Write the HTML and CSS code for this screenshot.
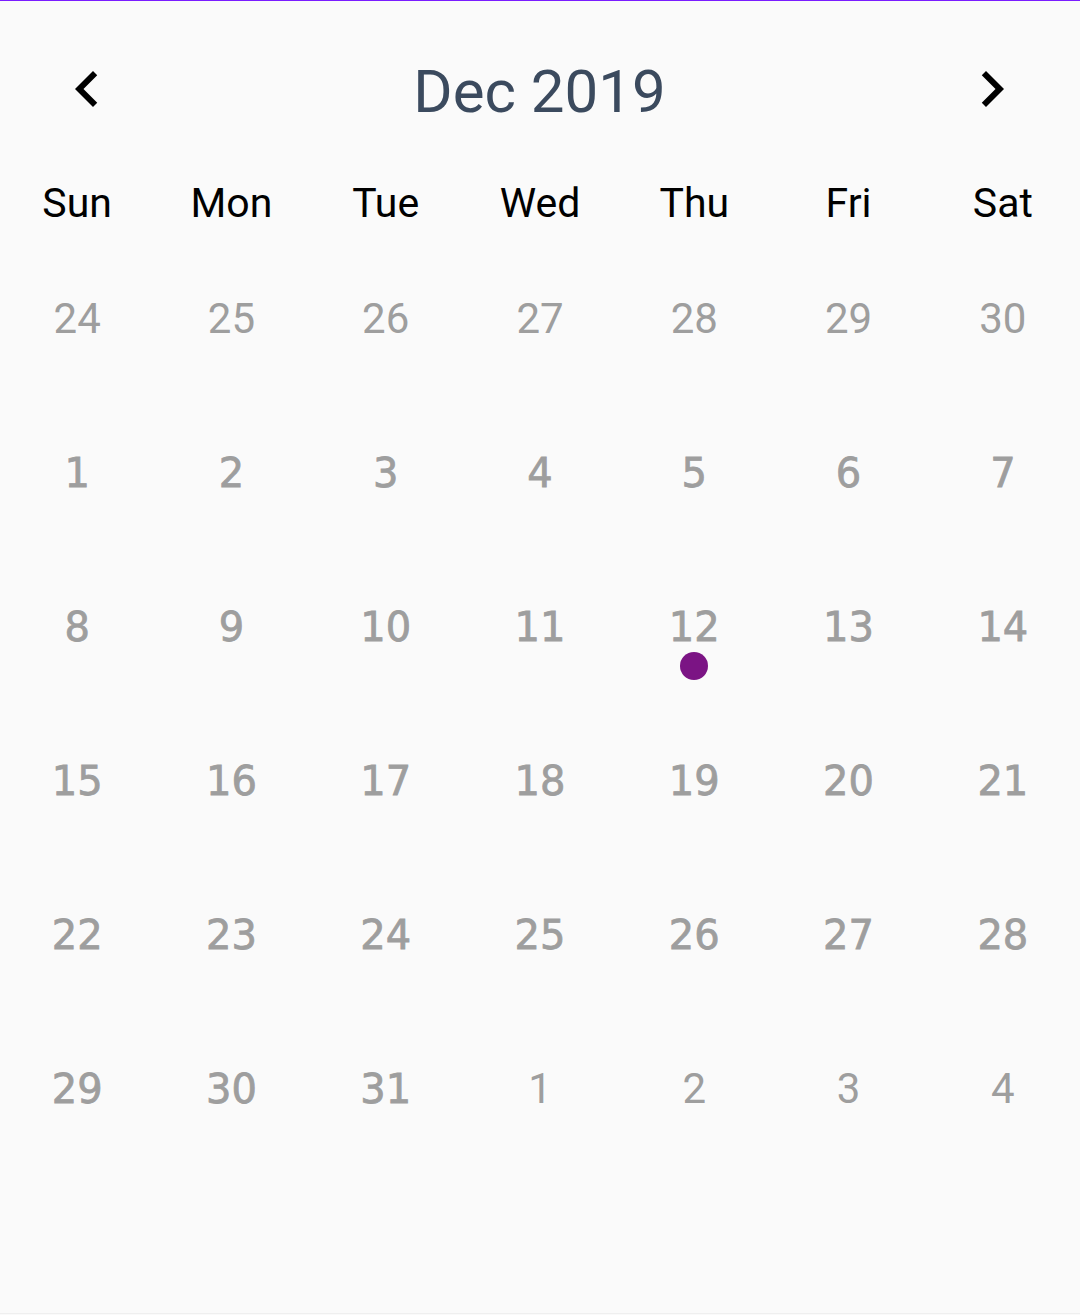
FILE: index.html
```html
<!DOCTYPE html>
<html lang="en">
<head>
  <meta charset="UTF-8" />
  <title>Calendar</title>
  <meta name="viewport" content="width=device-width, initial-scale=1.0">
  <link rel="stylesheet" href="styles.css">
</head>
<body>
  <div class="calendar">
    <div class="header">
      <button class="nav" aria-label="Previous month">
        <svg viewBox="0 0 24 24" width="72" height="72"><path d="M15.41 7.41L14 6l-6 6 6 6 1.41-1.41L10.83 12z"/></svg>
      </button>
      <h1 class="title">Dec 2019</h1>
      <button class="nav" aria-label="Next month">
        <svg viewBox="0 0 24 24" width="72" height="72"><path d="M10 6L8.59 7.41 13.17 12l-4.58 4.59L10 18l6-6z"/></svg>
      </button>
    </div>

    <div class="weekdays">
      <div>Sun</div><div>Mon</div><div>Tue</div><div>Wed</div><div>Thu</div><div>Fri</div><div>Sat</div>
    </div>

    <div class="days">
      <div class="day other">24</div><div class="day other">25</div><div class="day other">26</div><div class="day other">27</div><div class="day other">28</div><div class="day other">29</div><div class="day other">30</div>
      <div class="day">1</div><div class="day">2</div><div class="day">3</div><div class="day">4</div><div class="day">5</div><div class="day">6</div><div class="day">7</div>
      <div class="day">8</div><div class="day">9</div><div class="day">10</div><div class="day">11</div><div class="day event">12</div><div class="day">13</div><div class="day">14</div>
      <div class="day">15</div><div class="day">16</div><div class="day">17</div><div class="day">18</div><div class="day">19</div><div class="day">20</div><div class="day">21</div>
      <div class="day">22</div><div class="day">23</div><div class="day">24</div><div class="day">25</div><div class="day">26</div><div class="day">27</div><div class="day">28</div>
      <div class="day">29</div><div class="day">30</div><div class="day">31</div><div class="day other">1</div><div class="day other">2</div><div class="day other">3</div><div class="day other">4</div>
    </div>
  </div>
</body>
</html>
```

FILE: styles.css
```css
html, body { margin: 0; padding: 0; }
body { font-family: Roboto, 'Liberation Sans', sans-serif; background: #fafafa; border-top: 1px solid #7a1cff; }
.calendar { height: 1313px; box-sizing: border-box; border-bottom: 1px solid #efefef; }

.header { display: flex; align-items: flex-start; height: 165px; box-sizing: border-box; padding: 52px 52px 0 51px; }
.nav { width: 72px; height: 72px; padding: 0; border: none; background: none; cursor: pointer; }
.nav svg { display: block; fill: #000; }
.title { flex: 1; margin: 3px 0 0; text-align: center; font-size: 60px; line-height: 72px; font-weight: 400; color: #3b4a5e; }

.weekdays { display: grid; grid-template-columns: repeat(7, 1fr); height: 75px; line-height: 74px; text-align: center; font-size: 41px; color: #000; }

.days { display: grid; grid-template-columns: repeat(7, 1fr); grid-auto-rows: 154px; }
.day { position: relative; display: flex; align-items: center; justify-content: center; padding-top: 2px; font-family: 'DejaVu Sans', sans-serif; font-size: 40px; color: #9e9e9e; -webkit-text-stroke: 0.8px #9e9e9e; }
.day.other { padding-top: 0; font-family: Roboto, 'Liberation Sans', sans-serif; font-size: 42px; -webkit-text-stroke: 0; }

/* event marker under the day number */
.day.event::after { content: ''; position: absolute; left: 50%; top: 50%; width: 28px; height: 28px; margin: 26px 0 0 -14px; border-radius: 50%; background: #7b1484; }
```
